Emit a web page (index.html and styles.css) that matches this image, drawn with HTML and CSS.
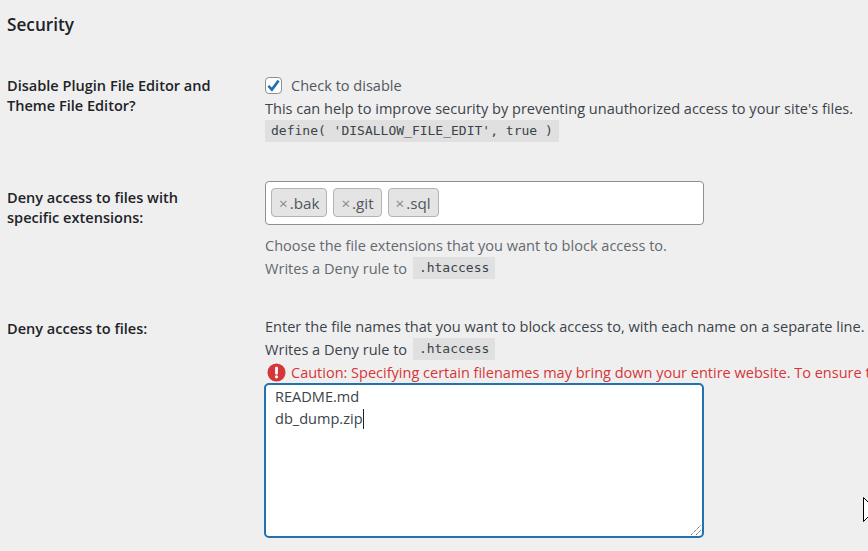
FILE: index.html
```html
<!DOCTYPE html>
<html lang="en">
<head>
<meta charset="utf-8">
<title>Security</title>
<link rel="stylesheet" href="styles.css">
</head>
<body>
<main class="page">
  <h2 class="title">Security</h2>

  <section class="row row-editor">
    <div class="label">Disable Plugin File Editor and<br>Theme File Editor?</div>
    <div class="field">
      <label class="check">
        <span class="box">
          <svg width="15" height="15" viewBox="0 0 15 15"><path d="M2.4 7.8 5.9 11.6 12.6 2.6" fill="none" stroke="#2271b1" stroke-width="2.6"/></svg>
        </span>
        <span>Check to disable</span>
      </label>
      <p class="line dark">This can help to improve security by preventing unauthorized access to your site's files.</p>
      <p class="line"><code class="code code-first">define( 'DISALLOW_FILE_EDIT', true )</code></p>
    </div>
  </section>

  <section class="row row-ext">
    <div class="label">Deny access to files with<br>specific extensions:</div>
    <div class="field">
      <div class="tags">
        <span class="tag"><span class="x">×</span>.bak</span>
        <span class="tag"><span class="x">×</span>.git</span>
        <span class="tag"><span class="x">×</span>.sql</span>
      </div>
      <p class="line muted">Choose the file extensions that you want to block access to.</p>
      <p class="line muted">Writes a Deny rule to <code class="code">.htaccess</code></p>
    </div>
  </section>

  <section class="row row-files">
    <div class="label">Deny access to files:</div>
    <div class="field">
      <p class="line dark">Enter the file names that you want to block access to, with each name on a separate line.</p>
      <p class="line dark">Writes a Deny rule to <code class="code">.htaccess</code></p>
      <p class="line caution">
        <svg class="alert" width="19" height="19" viewBox="0 0 20 20"><circle cx="10" cy="10" r="9.5" fill="#d63638"/><rect x="8.5" y="4" width="3" height="8" rx="1" fill="#fff"/><circle cx="10" cy="14.6" r="1.7" fill="#fff"/></svg>
        <span class="caution-text">Caution: Specifying certain filenames may bring down your entire website. To ensure that it continues to work</span>
      </p>
      <div class="area">
        <div>README.md</div>
        <div>db_dump.zip<span class="caret"></span></div>
        <svg class="grip" width="12" height="12" viewBox="0 0 12 12"><path d="M1 11 11 1M6 11 11 6" stroke="#666" stroke-width="1" stroke-dasharray="1.4 .6" fill="none"/></svg>
      </div>
    </div>
  </section>
</main>
<svg class="cursor" width="8" height="26" viewBox="0 0 8 26"><path d="M.5.5V24.5L7 18V7Z" fill="#fff" stroke="#000"/></svg>
</body>
</html>
```
FILE: styles.css
```css
* { box-sizing: border-box; }
html, body { margin: 0; height: 551px; overflow: hidden; background: #efefef; }
body { position: relative; font-family: "Open Sans", "Noto Sans", sans-serif; color: #3c434a; }
.page { width: 868px; overflow: hidden; padding: 13px 0 0 7px; height: 551px; }
.title { margin: 0 0 37px; font-size: 17.2px; line-height: 24px; font-weight: 600; color: #1d2327; }
.row { display: flex; }
.label { flex: 0 0 258px; font-size: 14.55px; line-height: 20px; font-weight: 600; color: #1d2327; }
.field { flex: 0 0 603px; font-size: 14.55px; line-height: 23px; min-width: 0; }
.row-editor { height: 107px; }
.row-ext { height: 134px; }
.row-editor .label { padding-top: 1px; }
.row-ext .label { padding-top: 6px; }
.row-files .label { padding-top: 3px; }
.check { display: flex; align-items: center; height: 23px; gap: 9px; color: #50575e; }
.box { width: 17px; height: 17px; border: 1px solid #8c8f94; border-radius: 4px; background: #fff; display: flex; align-items: center; justify-content: center; }
.line { margin: 0; white-space: nowrap; height: 23px; }
.dark { color: #3c434a; }
.muted { color: #646970; }
.caution { color: #d63638; display: flex; align-items: center; gap: 5px; height: 22px; padding-left: 2px; }
.alert { flex: none; }
.caution-text { flex: none; letter-spacing: -.02px; }
.code { font-family: "DejaVu Sans Mono", monospace; font-size: 13px; line-height: 21px; display: inline-block; vertical-align: top; padding: 0 6px; margin-left: 2px; background: #e0e0e0; color: #3c434a; height: 22px; }
.code-first { margin-left: 0; }
.tags { width: 439px; height: 44px; border: 1px solid #8c8f94; border-radius: 4px; background: #fff; padding: 6px 5px; display: flex; gap: 6px; margin-bottom: 9px; }
.tag { display: flex; align-items: center; height: 29px; padding: 1px 7px 0; border: 1px solid #b3b3b3; border-radius: 4px; background: #e4e4e4; color: #50575e; font-size: 15.2px; }
.x { color: #888; margin-right: 2px; font-size: 15.2px; }
.area { position: relative; width: 440px; height: 155px; margin-left: -1px; border: 2px solid #2271b1; border-radius: 5px; background: #fff; padding: 0 9px; color: #3c434a; font-size: 14.55px; line-height: 22px; }
.caret { display: inline-block; width: 1px; height: 20px; background: #1d2327; vertical-align: -5px; }
.grip { position: absolute; right: 0; bottom: 0; }
.cursor { position: absolute; left: 863px; top: 497px; }
```
